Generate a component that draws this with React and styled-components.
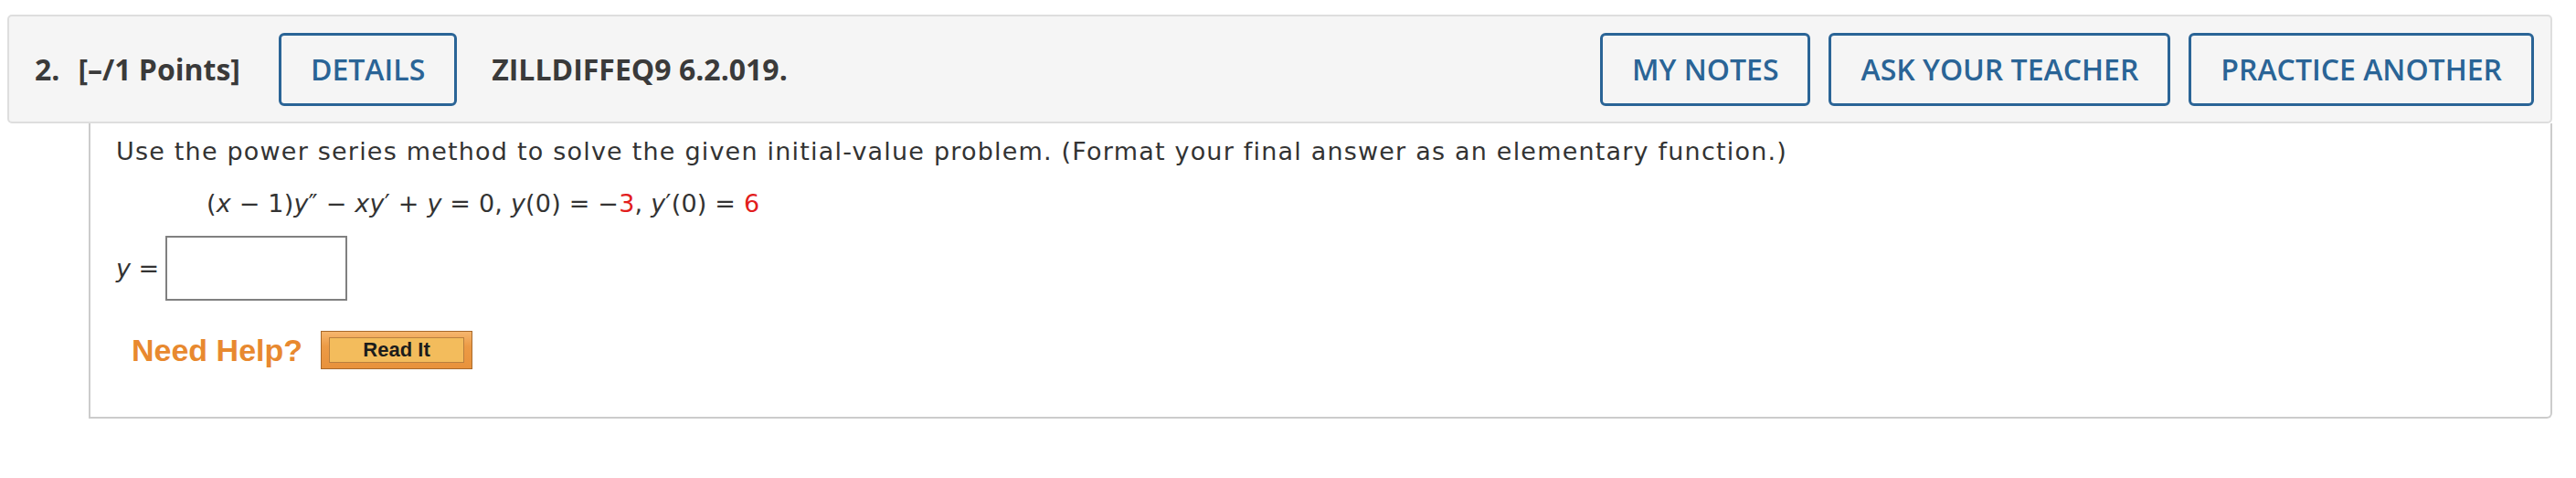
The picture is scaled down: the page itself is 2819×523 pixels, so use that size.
import React from 'react'
import styled, { createGlobalStyle } from 'styled-components'

const GlobalStyle = createGlobalStyle`
  html, body {
    margin: 0;
    padding: 0;
    background: #fff;
  }
  body {
    width: 2819px;
    height: 523px;
    overflow: hidden;
  }
`

const Page = styled.div`
  padding: 16px 26px 0 8px;
`

const Header = styled.div`
  display: flex;
  align-items: center;
  height: 115px;
  padding: 0 18px 0 28px;
  background: #f5f5f5;
  border: 2px solid #dedede;
  border-radius: 5px;
  font-family: 'Open Sans', 'Liberation Sans', sans-serif;
  font-weight: 700;
  font-size: 32px;
  color: #3a3a3a;
`

const Number = styled.span`
  margin-right: 20px;
`

const Points = styled.span`
  margin-right: 42px;
`

const Title = styled.span`
  margin-left: 38px;
  flex: 1;
`

const Actions = styled.div`
  display: flex;
  gap: 20px;
`

const OutlineButton = styled.button`
  box-sizing: border-box;
  height: 80px;
  padding: 0 32px;
  border: 3px solid #2a6496;
  border-radius: 6px;
  background: transparent;
  color: #2a6496;
  font-family: 'Open Sans', 'Liberation Sans', sans-serif;
  font-weight: 600;
  font-size: 32px;
  cursor: pointer;
`

const Body = styled.div`
  box-sizing: border-box;
  height: 323px;
  margin-left: 89px;
  padding: 16px 0 0 28px;
  border: 2px solid #cccccc;
  border-top: none;
  border-radius: 0 0 6px 0;
  font-family: 'DejaVu Sans', Verdana, sans-serif;
  font-size: 27px;
  line-height: 30px;
  color: #333;
`

const Prompt = styled.div`
  letter-spacing: 1.2px;
`

const Equation = styled.div`
  margin-top: 27px;
  padding-left: 99px;
  letter-spacing: 0.2px;
`

const I = styled.i`
  font-style: italic;
`

const Red = styled.span`
  color: #e21d1d;
`

const AnswerRow = styled.div`
  display: flex;
  align-items: center;
  margin-top: 20px;
`

const AnswerLabel = styled.span`
  margin-right: 7px;
`

const AnswerInput = styled.input`
  box-sizing: border-box;
  width: 199px;
  height: 71px;
  border: 2px solid #808080;
  background: #fff;
  font-size: 24px;
  padding: 0 8px;
`

const HelpRow = styled.div`
  display: flex;
  align-items: center;
  margin-top: 33px;
  margin-left: 17px;
`

const NeedHelp = styled.span`
  font-family: 'Liberation Sans', Arial, sans-serif;
  font-weight: 700;
  font-size: 34px;
  color: #e8892f;
  margin-right: 20px;
`

const ReadItButton = styled.button`
  box-sizing: border-box;
  width: 166px;
  height: 42px;
  padding: 6px 8px;
  border: 1px solid #a8692b;
  background: linear-gradient(#f6b66e, #ec9a45 40%, #e8923c);
  cursor: pointer;
`

const ReadItInner = styled.span`
  display: flex;
  align-items: center;
  justify-content: center;
  box-sizing: border-box;
  height: 100%;
  border: 1px solid #b97f3f;
  background: #f3bc5c;
  font-family: 'Liberation Sans', Arial, sans-serif;
  font-weight: 700;
  font-size: 22px;
  color: #1c1c1c;
`

export default function App() {
  return (
    <Page>
      <GlobalStyle />
      <Header>
        <Number>2.</Number>
        <Points>[–/1 Points]</Points>
        <OutlineButton>DETAILS</OutlineButton>
        <Title>ZILLDIFFEQ9 6.2.019.</Title>
        <Actions>
          <OutlineButton>MY NOTES</OutlineButton>
          <OutlineButton>ASK YOUR TEACHER</OutlineButton>
          <OutlineButton>PRACTICE ANOTHER</OutlineButton>
        </Actions>
      </Header>
      <Body>
        <Prompt>
          Use the power series method to solve the given initial-value problem. (Format your final answer as an elementary function.)
        </Prompt>
        <Equation>
          (<I>x</I> − 1)<I>y</I>″ − <I>xy</I>′ + <I>y</I> = 0, <I>y</I>(0) = −<Red>3</Red>, <I>y</I>′(0) = <Red>6</Red>
        </Equation>
        <AnswerRow>
          <AnswerLabel>
            <I>y</I> =
          </AnswerLabel>
          <AnswerInput type="text" />
        </AnswerRow>
        <HelpRow>
          <NeedHelp>Need Help?</NeedHelp>
          <ReadItButton>
            <ReadItInner>Read It</ReadItInner>
          </ReadItButton>
        </HelpRow>
      </Body>
    </Page>
  )
}
